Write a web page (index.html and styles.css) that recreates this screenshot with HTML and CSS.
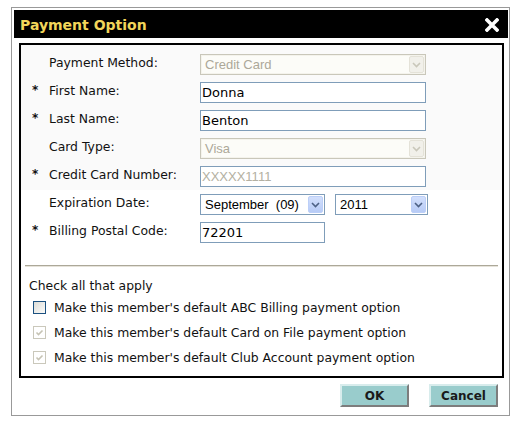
FILE: index.html
```
<!DOCTYPE html>
<html>
<head>
<meta charset="utf-8">
<title>Payment Option</title>
<link rel="stylesheet" href="styles.css">
</head>
<body>
<div class="dialog">
  <div class="titlebar">
    <span class="title">Payment Option</span>
    <svg class="close" width="14" height="14" viewBox="0 0 14 14"><path d="M2 2 L12 12 M12 2 L2 12" stroke="#fff" stroke-width="3.6" stroke-linecap="square"/></svg>
  </div>
  <div class="formbox">
    <div class="rows rows-top">
      <span class="star"></span><span class="label">Payment Method:</span>
      <div class="field"><div class="select disabled w226"><span class="sel-text">Credit Card</span><span class="arrow"><svg width="9" height="6" viewBox="0 0 9 6"><path d="M1 1 L4.5 4.5 L8 1" fill="none" stroke="currentColor" stroke-width="1.6"/></svg></span></div></div>

      <span class="star">*</span><span class="label">First Name:</span>
      <div class="field"><div class="input w226">Donna</div></div>

      <span class="star">*</span><span class="label">Last Name:</span>
      <div class="field"><div class="input w226">Benton</div></div>

      <span class="star"></span><span class="label">Card Type:</span>
      <div class="field"><div class="select disabled w226"><span class="sel-text">Visa</span><span class="arrow"><svg width="9" height="6" viewBox="0 0 9 6"><path d="M1 1 L4.5 4.5 L8 1" fill="none" stroke="currentColor" stroke-width="1.6"/></svg></span></div></div>

      <span class="star">*</span><span class="label">Credit Card Number:</span>
      <div class="field"><div class="input w226 input-disabled">XXXXX1111</div></div>
    </div>
    <div class="rows rows-bottom">
      <span class="star"></span><span class="label">Expiration Date:</span>
      <div class="field pair">
        <div class="select w125"><span class="sel-text">September&nbsp; (09)</span><span class="arrow"><svg width="9" height="6" viewBox="0 0 9 6"><path d="M1 1 L4.5 4.5 L8 1" fill="none" stroke="currentColor" stroke-width="1.6"/></svg></span></div>
        <div class="select w93"><span class="sel-text">2011</span><span class="arrow"><svg width="9" height="6" viewBox="0 0 9 6"><path d="M1 1 L4.5 4.5 L8 1" fill="none" stroke="currentColor" stroke-width="1.6"/></svg></span></div>
      </div>

      <span class="star">*</span><span class="label">Billing Postal Code:</span>
      <div class="field"><div class="input w125">72201</div></div>
    </div>
    <div class="separator"></div>
    <div class="checks">
      <div class="checks-title">Check all that apply</div>
      <label class="check-row"><span class="cb"></span><span>Make this member's default ABC Billing payment option</span></label>
      <label class="check-row"><span class="cb cb-disabled"><svg width="11" height="11" viewBox="0 0 11 11"><path d="M2.5 5.5 L4.5 7.5 L8.5 3.5" fill="none" stroke="#c6c3b4" stroke-width="1.6"/></svg></span><span>Make this member's default Card on File payment option</span></label>
      <label class="check-row"><span class="cb cb-disabled"><svg width="11" height="11" viewBox="0 0 11 11"><path d="M2.5 5.5 L4.5 7.5 L8.5 3.5" fill="none" stroke="#c6c3b4" stroke-width="1.6"/></svg></span><span>Make this member's default Club Account payment option</span></label>
    </div>
  </div>
  <div class="buttons">
    <button class="btn">OK</button>
    <button class="btn">Cancel</button>
  </div>
</div>
</body>
</html>
```

FILE: styles.css
```
html, body {
  margin: 0;
  padding: 0;
  background: #fff;
}

body {
  font-family: "DejaVu Sans", Verdana, sans-serif;
  font-size: 12px;
  color: #111;
}

.dialog {
  box-sizing: border-box;
  width: 499px;
  margin: 7px 0 0 11px;
  border: 1px solid #999;
  padding: 2px 1px 0 2px;
  background: #fff;
}

.titlebar {
  height: 28px;
  background: #000;
  display: flex;
  align-items: center;
  justify-content: space-between;
  padding: 0 9px 0 6px;
}

.title {
  color: #f2d65a;
  font-weight: bold;
  font-size: 14px;
  line-height: 16px;
  padding-top: 1px;
}

.close {
  display: block;
  margin-top: 2px;
}

.formbox {
  box-sizing: border-box;
  width: 485px;
  height: 335px;
  margin: 5px 0 0 5px;
  border: 2px solid #000;
  background: #fff;
}

.rows {
  display: grid;
  grid-template-columns: 17px 151px 1fr;
  padding-left: 11px;
}

.rows-top {
  background: #fafafa;
  padding-top: 9px;
  grid-template-rows: repeat(4, 28px) 24px;
}

.rows-bottom {
  padding-top: 4px;
  grid-template-rows: 28px 28px;
}

.star {
  font-weight: bold;
  font-size: 12px;
  line-height: 15px;
  padding-top: 1px;
}

.label {
  line-height: 15px;
  padding-top: 1px;
  font-size: 12.4px;
}

.field {
  display: flex;
  align-items: flex-start;
}

.field.pair {
  gap: 10px;
}

.input {
  box-sizing: border-box;
  height: 21px;
  border: 1px solid #7f9db9;
  background: #fff;
  font-size: 13px;
  line-height: 19px;
  padding-left: 1px;
  color: #000;
  white-space: nowrap;
}

.input-disabled {
  font-family: "Liberation Sans", Arial, sans-serif;
  color: #b3b0a2;
  font-size: 13px;
}

.w226 { width: 226px; }
.w125 { width: 125px; }
.w93 { width: 93px; }

.select {
  box-sizing: border-box;
  height: 21px;
  border: 1px solid #7f9db9;
  background: #fff;
  display: flex;
  align-items: center;
  padding: 1px;
  font-family: "Liberation Sans", Arial, sans-serif;
  font-size: 13px;
  color: #000;
}

.sel-text {
  flex: 1;
  padding-left: 3px;
  white-space: nowrap;
  overflow: hidden;
}

.arrow {
  box-sizing: border-box;
  width: 15px;
  height: 17px;
  display: flex;
  align-items: center;
  justify-content: center;
  background: linear-gradient(#d2dffc, #b7cbf6);
  border: 1px solid #bccff8;
  border-radius: 2px;
  color: #4d6185;
}

.select.disabled {
  border-color: #c9c7ba;
  background: #fcfcf8;
  color: #aca899;
  box-shadow: inset 0 0 0 1px #f4f3ec;
}

.select.disabled .arrow {
  background: #f1f0ea;
  border-color: #e4e2d8;
  color: #c9c7ba;
}

.separator {
  margin: 15px 4px 0 4px;
  height: 1px;
  background: #aca899;
  border-bottom: 1px solid #e6e3da;
}

.checks {
  padding: 11px 0 0 8px;
}

.checks-title {
  line-height: 16px;
  height: 17px;
  font-size: 12.4px;
}

.check-row {
  display: flex;
  align-items: center;
  height: 25px;
  font-size: 12.4px;
}

.cb {
  box-sizing: border-box;
  width: 13px;
  height: 13px;
  margin-left: 4px;
  margin-right: 8px;
  border: 1px solid #1c5180;
  background: linear-gradient(135deg, #dcdcd7, #fbfbf9);
  display: flex;
  align-items: center;
  justify-content: center;
}

.cb-disabled {
  border-color: #cac8bb;
  background: #fff;
}

.buttons {
  display: flex;
  justify-content: flex-end;
  gap: 20px;
  padding: 6px 10px 8px 0;
}

.btn {
  box-sizing: border-box;
  width: 69px;
  height: 23px;
  background: #99cccc;
  border: 2px solid;
  border-color: #d8ecec #7d7d7d #7d7d7d #d8ecec;
  font-family: "DejaVu Sans", Verdana, sans-serif;
  font-weight: bold;
  font-size: 12px;
  color: #1a1a1a;
  padding: 0;
  margin: 0;
}
```
